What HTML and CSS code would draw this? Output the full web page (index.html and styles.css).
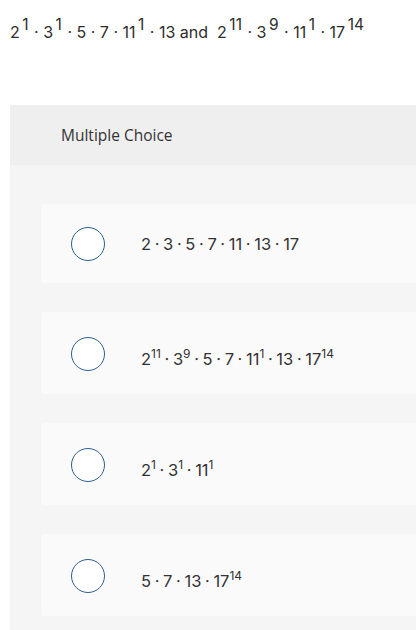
FILE: index.html
```html
<!DOCTYPE html>
<html lang="en">
<head>
<meta charset="utf-8">
<title>Multiple Choice</title>
<link rel="stylesheet" href="styles.css">
</head>
<body>
<div class="question">
  <p class="stem">2<sup>1</sup> · 3<sup>1</sup> · 5 · 7 · 11<sup>1</sup> · 13 and&nbsp; 2<sup>11</sup> · 3<sup>9</sup> · 11<sup>1</sup> · 17<sup>14</sup></p>
</div>
<section class="card">
  <div class="card-head">Multiple Choice</div>
  <div class="card-body">
    <ul class="options">
      <li class="option"><span class="radio"></span><span class="label">2 · 3 · 5 · 7 · 11 · 13 · 17</span></li>
      <li class="option"><span class="radio"></span><span class="label">2<sup>11</sup> · 3<sup>9</sup> · 5 · 7 · 11<sup>1</sup> · 13 · 17<sup>14</sup></span></li>
      <li class="option"><span class="radio"></span><span class="label">2<sup>1</sup> · 3<sup>1</sup> · 11<sup>1</sup></span></li>
      <li class="option"><span class="radio"></span><span class="label">5 · 7 · 13 · 17<sup>14</sup></span></li>
    </ul>
  </div>
</section>
</body>
</html>
```

FILE: styles.css
```css
html, body {
  margin: 0;
  padding: 0;
  overflow: hidden;
  background: #ffffff;
}

body {
  font-family: "Open Sans", "Liberation Sans", sans-serif;
  color: #333333;
}

.question {
  padding: 20px 10px 0;
}

.stem {
  margin: 0;
  font-family: Inter, "Open Sans", sans-serif;
  font-size: 16px;
  line-height: 24px;
  color: #2d2d2d;
  white-space: nowrap;
}

.stem sup {
  font-size: 15.5px;
  line-height: 0;
  vertical-align: 8px;
  margin: 0 1px 0 2.5px;
}

.card {
  margin: 61px 0 0 10px;
  width: 700px;
}

.card-head {
  height: 60px;
  display: flex;
  align-items: center;
  padding-left: 51px;
  background: #efefef;
  font-size: 15.5px;
  line-height: 20px;
  color: #333333;
}

.card-body {
  background: #f5f5f5;
  padding: 39px 0 40px 31px;
}

.options {
  list-style: none;
  margin: 0;
  padding: 0;
  display: flex;
  flex-direction: column;
  gap: 29px;
}

.option {
  display: flex;
  align-items: center;
  background: #fafafa;
  border-radius: 4px;
  padding: 23px 30px 22px;
}

.radio {
  flex: none;
  width: 34px;
  height: 34px;
  box-sizing: border-box;
  border: 1.5px solid #2d5f93;
  border-radius: 50%;
  background: #ffffff;
}

.label {
  margin-left: 36px;
  font-family: Inter, "Open Sans", sans-serif;
  font-size: 16.5px;
  line-height: 25px;
  word-spacing: -1px;
  color: #333333;
  white-space: nowrap;
}

.label sup {
  font-size: 12px;
  line-height: 37px;
  vertical-align: 7px;
}
```
